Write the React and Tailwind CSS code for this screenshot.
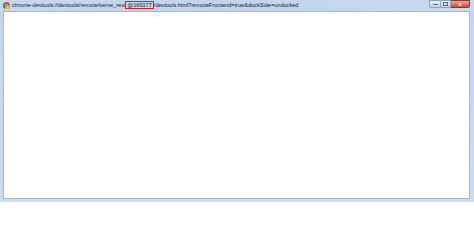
import React from "react";

function ChromeIcon() {
  return (
    <svg width="7" height="7" viewBox="0 0 16 16">
      <circle cx="8" cy="8" r="8" fill="#db4437" />
      <path d="M8 8 L16 8 A8 8 0 0 1 4 14.93 Z" fill="#f4c20d" />
      <path d="M8 8 L4 14.93 A8 8 0 0 1 1.07 4 Z" fill="#0f9d58" />
      <circle cx="8" cy="8" r="3.6" fill="#fff" />
      <circle cx="8" cy="8" r="2.8" fill="#4285f4" />
    </svg>
  );
}

export default function App() {
  return (
    <div
      className="w-[474px] h-[202px] flex flex-col bg-gradient-to-b from-[#c2d6ef] to-[#c9dcf1] overflow-hidden"
      style={{ fontFamily: '"Liberation Sans", Arial, sans-serif' }}
    >
      <div className="h-[11px] flex items-start pl-[3px] pr-[4px] bg-gradient-to-r from-[#c4d8ef] via-[#bfd4ee] to-[#c8daf0]">
        <div className="mt-[2px] flex items-center">
          <ChromeIcon />
        </div>
        <div className="ml-[2px] mt-[1px] text-[5.6px] leading-[8px] text-[#1a1a1a] whitespace-nowrap flex items-center">
          <span>chrome-devtools://devtools/remote/serve_rev/</span>
          <span className="border border-[#e02020] px-[1px] leading-[6px]">@169177</span>
          <span>/devtools.html?remoteFrontend=true&amp;dockSide=undocked</span>
        </div>
        <div className="flex-1" />
        <div className="flex h-[8px] mt-0">
          <div className="w-[12px] h-[8px] border border-[#8ea2bd] rounded-bl-[2px] bg-gradient-to-b from-[#e4ecf6] to-[#c5d4e6] flex items-end justify-center pb-[2px]">
            <div className="w-[5px] h-[1px] bg-[#566a86]" />
          </div>
          <div className="w-[10px] h-[8px] border-y border-r border-[#8ea2bd] bg-gradient-to-b from-[#e4ecf6] to-[#c5d4e6] flex items-center justify-center">
            <div className="w-[5px] h-[4px] border border-[#566a86]" />
          </div>
          <div className="w-[19px] h-[8px] border-y border-r border-[#8a3a30] rounded-br-[2px] bg-gradient-to-b from-[#e9a99c] to-[#c74a38] flex items-center justify-center text-white text-[6px] leading-[6px] font-bold">
            x
          </div>
        </div>
      </div>
      <div className="flex-1 ml-[3px] mr-[4px] mb-[3px] border border-[#a9b6c6] bg-white" />
    </div>
  );
}
